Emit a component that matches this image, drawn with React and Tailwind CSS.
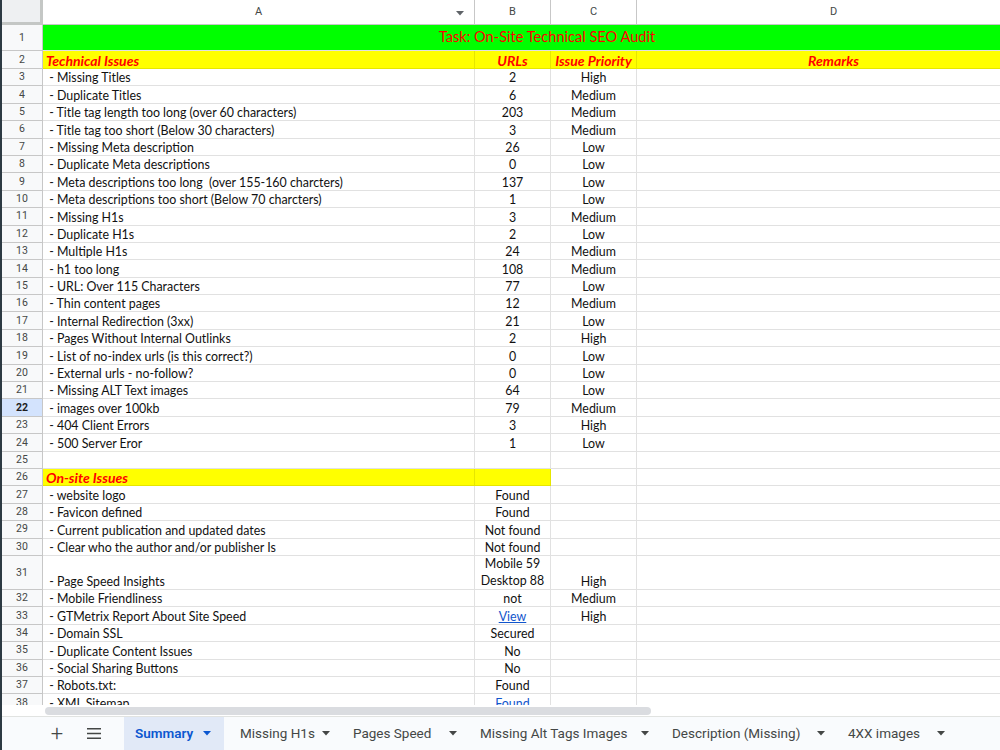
// spreadsheet rows: [label, urls, priority]
const issues = [
  ['Missing Titles', '2', 'High'],
  ['Duplicate Titles', '6', 'Medium'],
  ['Title tag length too long (over 60 characters)', '203', 'Medium'],
  ['Title tag too short (Below 30 characters)', '3', 'Medium'],
  ['Missing Meta description', '26', 'Low'],
  ['Duplicate Meta descriptions', '0', 'Low'],
  ['Meta descriptions too long  (over 155-160 charcters)', '137', 'Low'],
  ['Meta descriptions too short (Below 70 charcters)', '1', 'Low'],
  ['Missing H1s', '3', 'Medium'],
  ['Duplicate H1s', '2', 'Low'],
  ['Multiple H1s', '24', 'Medium'],
  ['h1 too long', '108', 'Medium'],
  ['URL: Over 115 Characters', '77', 'Low'],
  ['Thin content pages', '12', 'Medium'],
  ['Internal Redirection (3xx)', '21', 'Low'],
  ['Pages Without Internal Outlinks', '2', 'High'],
  ['List of no-index urls (is this correct?)', '0', 'Low'],
  ['External urls - no-follow?', '0', 'Low'],
  ['Missing ALT Text images', '64', 'Low'],
  ['images over 100kb', '79', 'Medium'],
  ['404 Client Errors', '3', 'High'],
  ['500 Server Eror', '1', 'Low'],
]

const onsite = [
  ['website logo', 'Found', ''],
  ['Favicon defined', 'Found', ''],
  ['Current publication and updated dates', 'Not found', ''],
  ['Clear who the author and/or publisher Is', 'Not found', ''],
  ['Page Speed Insights', 'speed', 'High'],
  ['Mobile Friendliness', 'not', 'Medium'],
  ['GTMetrix Report About Site Speed', 'link', 'High'],
  ['Domain SSL', 'Secured', ''],
  ['Duplicate Content Issues', 'No', ''],
  ['Social Sharing Buttons', 'No', ''],
  ['Robots.txt:', 'Found', ''],
  ['XML Sitemap', 'blue', ''],
]

// sheet tabs with their widths
const tabs = [
  { name: 'Missing H1s', w: 'w-[113px]' },
  { name: 'Pages Speed', w: 'w-[127px]' },
  { name: 'Missing Alt Tags Images', w: 'w-[192px]' },
  { name: 'Description (Missing)', w: 'w-[176px]' },
  { name: '4XX images', w: 'w-[120px]' },
]

const cols = 'grid grid-cols-[41px_432px_76px_86px_394px]'
const cell = 'border-r border-b border-[#e1e1e1] px-[3px] flex items-end whitespace-pre overflow-hidden leading-[14px]'
const rowNum = (n, sel) =>
  `border-r border-b border-[#c7c7c7] flex items-center justify-center text-[10.5px] ${sel ? 'bg-[#d3e3fd] text-[#1f1f1f] font-bold' : 'bg-[#f8f9fa] text-[#444746]'}`

const Caret = ({ className }) => (
  <svg width="8" height="5" viewBox="0 0 8 5" className={className}><path d="M0 0h8L4 4.5z" fill="currentColor" /></svg>
)

const App = () => {
  return (
    <div className="w-[1000px] h-[750px] overflow-hidden flex bg-white" style={{ fontFamily: 'Lato, sans-serif' }}>
      <div className="w-[2px] h-full bg-[#2d3a43] shrink-0"></div>
      <div className="flex-1 flex flex-col min-w-0">
        {/* grid */}
        <div className="h-[705px] overflow-hidden text-[12.4px] text-[#111]">
          <div className={`${cols} h-[25px]`} style={{ fontFamily: 'Roboto, sans-serif' }}>
            <div className="bg-[#eef0f2] border-r-[3px] border-b-[3px] border-[#c4c7c5]"></div>
            <div className="relative border-r border-b border-[#c7c7c7] flex items-center justify-center text-[11px] text-[#444746]">
              A
              <Caret className="absolute right-[10px] top-[11px] text-[#5f6368]" />
            </div>
            <div className="border-r border-b border-[#c7c7c7] flex items-center justify-center text-[11px] text-[#444746]">B</div>
            <div className="border-r border-b border-[#c7c7c7] flex items-center justify-center text-[11px] text-[#444746]">C</div>
            <div className="border-r border-b border-[#c7c7c7] flex items-center justify-center text-[11px] text-[#444746]">D</div>
          </div>

          <div className={`${cols} h-[26px]`}>
            <div className={rowNum(1)} style={{ fontFamily: 'Roboto, sans-serif' }}>1</div>
            <div className="col-span-4 bg-[#00ff00] border-b border-[#e1e1e1] flex items-end justify-center pl-[20px] pb-[2px] text-[14.6px] text-[#ff0000]">
              Task: On-Site Technical SEO Audit
            </div>
          </div>

          <div className={`${cols} h-[18px] font-bold italic text-[14px] text-[#ff0000]`}>
            <div className={`${rowNum(2)} not-italic font-normal`} style={{ fontFamily: 'Roboto, sans-serif' }}>2</div>
            <div className={`${cell} bg-[#ffff00] border-[#e6e600]`}>Technical Issues</div>
            <div className={`${cell} bg-[#ffff00] border-[#e6e600] justify-center`}>URLs</div>
            <div className={`${cell} bg-[#ffff00] border-[#e6e600] justify-center`}>Issue Priority</div>
            <div className={`${cell} bg-[#ffff00] border-[#e6e600] justify-center`}>Remarks</div>
          </div>

          {issues.map(([label, urls, prio], i) => (
            <div key={label} className={`${cols} h-[17.4px]`}>
              <div className={rowNum(i + 3, i + 3 === 22)} style={{ fontFamily: 'Roboto, sans-serif' }}>{i + 3}</div>
              <div className={cell}>{' - ' + label}</div>
              <div className={`${cell} justify-center`}>{urls}</div>
              <div className={`${cell} justify-center`}>{prio}</div>
              <div className={cell}></div>
            </div>
          ))}

          <div className={`${cols} h-[17.4px]`}>
            <div className={rowNum(25)} style={{ fontFamily: 'Roboto, sans-serif' }}>25</div>
            <div className={cell}></div>
            <div className={cell}></div>
            <div className={cell}></div>
            <div className={cell}></div>
          </div>

          <div className={`${cols} h-[17.4px]`}>
            <div className={rowNum(26)} style={{ fontFamily: 'Roboto, sans-serif' }}>26</div>
            <div className={`${cell} bg-[#ffff00] border-[#e6e600] font-bold italic text-[14px] text-[#ff0000]`}>On-site Issues</div>
            <div className={`${cell} bg-[#ffff00] border-[#e6e600]`}></div>
            <div className={cell}></div>
            <div className={cell}></div>
          </div>

          {onsite.map(([label, val, prio], i) => {
            const n = i + 27
            const tall = val === 'speed'
            return (
              <div key={label} className={`${cols} ${tall ? 'h-[34px]' : 'h-[17.4px]'}`}>
                <div className={rowNum(n)} style={{ fontFamily: 'Roboto, sans-serif' }}>{n}</div>
                <div className={cell}>{' - ' + label}</div>
                <div className={`${cell} justify-center`}>
                  {tall ? (
                    <span className="flex flex-col items-center leading-[17px]"><span>Mobile 59</span><span>Desktop 88</span></span>
                  ) : val === 'link' ? (
                    <span className="text-[#1155cc] underline">View</span>
                  ) : val === 'blue' ? (
                    <span className="text-[#1155cc]">Found</span>
                  ) : val}
                </div>
                <div className={`${cell} justify-center`}>{prio}</div>
                <div className={cell}></div>
              </div>
            )
          })}
        </div>

        {/* horizontal scrollbar */}
        <div className="h-[12px] border-b border-[#e1e3e1] flex items-center pl-[43px] bg-white">
          <div className="w-[606px] h-[8px] rounded-full bg-[#dadce0]"></div>
        </div>

        {/* sheet tabs */}
        <div className="flex-1 bg-[#f9fbfd] flex items-stretch text-[13.5px] text-[#444746]" style={{ fontFamily: 'Roboto, sans-serif' }}>
          <div className="ml-[40px] w-[30px] flex items-center justify-center text-[22px] font-light text-[#444746]">+</div>
          <div className="w-[44px] flex items-center justify-center">
            <svg width="14" height="11" viewBox="0 0 14 11"><path d="M0 0.75h14M0 5.5h14M0 10.25h14" stroke="#444746" strokeWidth="1.5" /></svg>
          </div>
          <div className="ml-[8px] w-[100px] flex items-center gap-[10px] pl-[11px] bg-[#e1e9f7] text-[#0b57d0] font-semibold">
            <span>Summary</span>
            <Caret className="text-[#0b57d0]" />
          </div>
          {tabs.map((t) => (
            <div key={t.name} className={`${t.w} shrink-0 flex items-center justify-between pl-[16px] pr-[7px]`}>
              <span>{t.name}</span>
              <Caret className="text-[#444746]" />
            </div>
          ))}
        </div>
      </div>
    </div>
  )
}

export default App
